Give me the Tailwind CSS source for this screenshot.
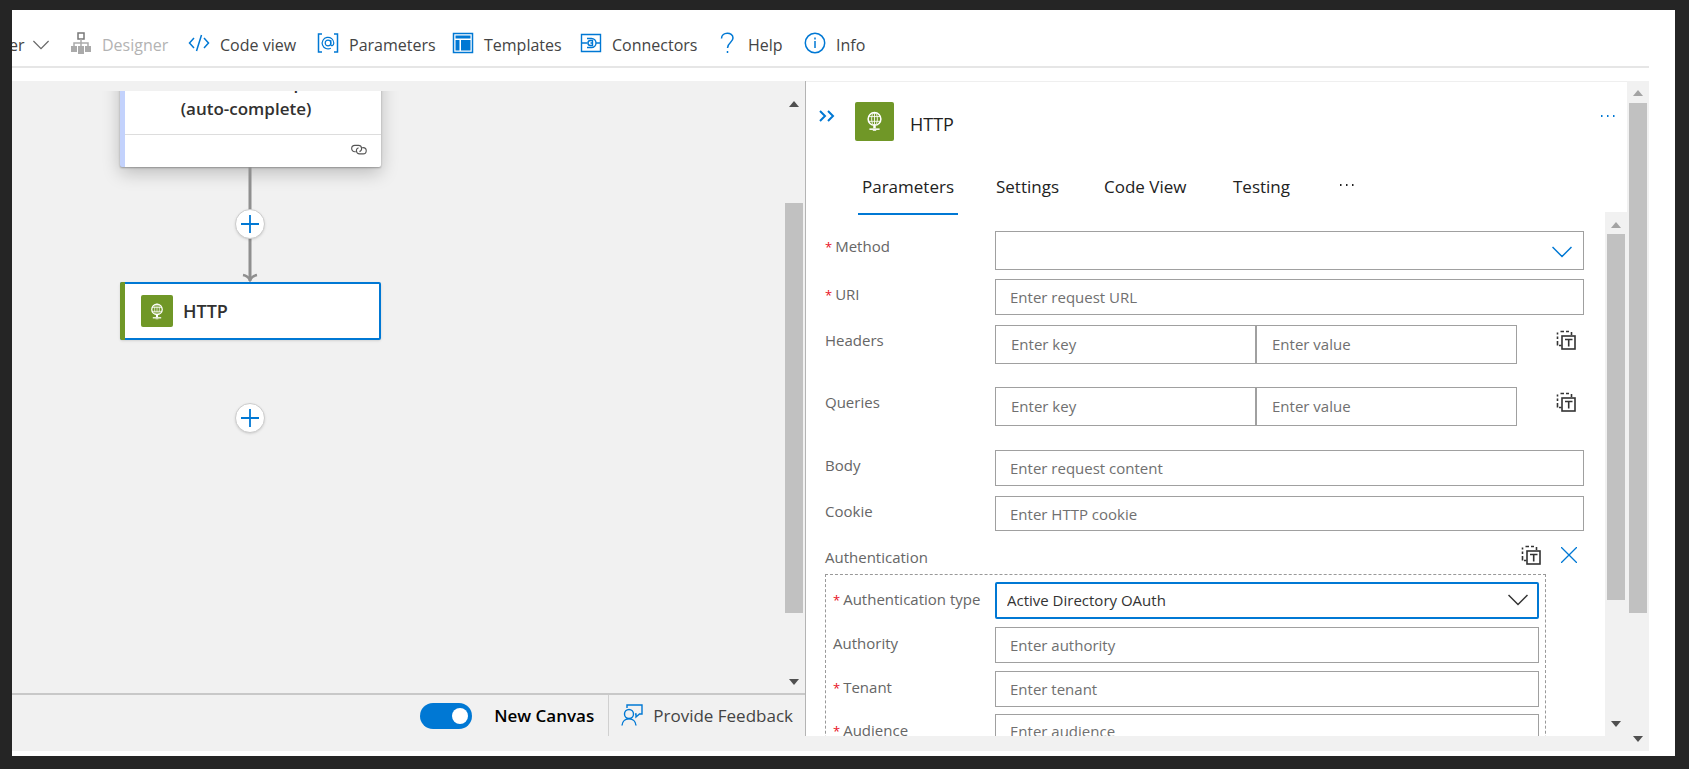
<!DOCTYPE html>
<html lang="en">
<head>
  <meta charset="UTF-8">
  <meta name="viewport" content="width=device-width, initial-scale=1.0">
  <title>Logic app designer</title>
  <script src="https://cdn.jsdelivr.net/npm/@tailwindcss/browser@4"></script>
</head>
<body class="bg-[#252525] font-['Segoe_UI','Open_Sans',sans-serif]">

<!-- Shared icons -->
<svg class="hidden" aria-hidden="true">
  <symbol id="globe" viewBox="0 0 20 24" fill="none" stroke="#fff">
    <circle cx="10" cy="9" r="7.5" stroke-width="1.8"/>
    <ellipse cx="10" cy="9" rx="3.4" ry="7.5"/>
    <path d="M3 6.2h14M3 11.8h14M10 1.5v15"/>
    <path d="M10 17v3" stroke-width="3"/>
    <path d="M4 21h12" stroke-width="1.8"/>
    <path d="M8 22.5h4"/>
  </symbol>
  <symbol id="dynamic" viewBox="0 0 20 20" fill="none" stroke="#333">
    <path d="M1.500 15.500V11M1.500 9V6.500M1.500 4.500V2.500M4.500 1.500H8M10 1.500h3M15.500 2v3M3 15.500h2.500" stroke-width="1.600"/>
    <rect x="6" y="6" width="13" height="13" stroke-width="1.600"/>
    <path d="M9 9.500h7.500M12.700 9.500v7" stroke-width="1.600"/>
  </symbol>
  <symbol id="chevron" viewBox="0 0 20 12" fill="none" stroke="currentColor">
    <path d="M0.500 1l9.500 9.500L19.500 1" stroke-width="1.5"/>
  </symbol>
  <symbol id="dots" viewBox="0 0 16 4" fill="currentColor">
    <path d="M1 1h1.500v2H1zM7 1h1.500v2H7zM13 1h1.500v2H13z"/>
  </symbol>
  <symbol id="up" viewBox="0 0 10 6"><path d="M5 0l5 6H0z" fill="currentColor"/></symbol>
  <symbol id="down" viewBox="0 0 10 6"><path d="M0 0h10L5 6z" fill="currentColor"/></symbol>
  <symbol id="plus" viewBox="0 0 20 20"><path d="M10 1v18M1 10h18" stroke="#0078d4" stroke-width="1.8"/></symbol>
</svg>

<div class="h-screen pt-[10px] pb-[13px] pl-3 pr-[14px]">
  <div class="h-full flex flex-col bg-white overflow-hidden pr-[26px] pb-[5px]">

    <!-- Toolbar -->
    <nav class="h-[58px] shrink-0 flex items-center border-b-2 border-[#e6e6e6] pt-[14px] text-base text-[#444] whitespace-nowrap">
      <button class="flex items-center gap-2 w-[58px] shrink-0 text-left">
        <span class="-ml-[3px]">er</span>
        <svg class="w-4 h-[10px] text-[#666]"><use href="#chevron"/></svg>
      </button>
      <button disabled class="flex items-center gap-[10px] w-[118px] shrink-0 text-[#b3b3b3]">
        <svg class="w-[22px] h-[22px] mb-1" viewBox="0 0 22 22">
          <rect x="8" y="1" width="6" height="6" fill="none" stroke="#777" stroke-width="1.5"/>
          <path d="M11 7v8M4 15v-4h14v4" fill="none" stroke="#aaa" stroke-width="1.5"/>
          <path d="M1 14h6v6H1zM8 14h6v8H8zM15 14h6v6h-6z" fill="#aaa"/>
        </svg>
        <span>Designer</span>
      </button>
      <button class="flex items-center gap-[10px] w-[129px] shrink-0">
        <svg class="w-[22px] h-[22px] mb-1" viewBox="0 0 22 22" fill="none" stroke="#0078d4" stroke-width="1.5">
          <path d="M6 6l-4.500 5L6 16M16 6l4.500 5L16 16M13.500 3l-5 16"/>
        </svg>
        <span>Code view</span>
      </button>
      <button class="flex items-center gap-[10px] w-[135px] shrink-0">
        <svg class="w-[22px] h-[22px] mb-1" viewBox="0 0 22 22" fill="none" stroke="#0078d4" stroke-width="1.5">
          <path d="M5 2H1.500v18H5M17 2h3.500v18H17"/>
          <circle cx="11" cy="11" r="2.800" stroke-width="1.2"/>
          <path d="M13.800 8v4.500c0 2 3 1.500 3-1.500a5.800 5.800 0 1 0-3 5.200" stroke-width="1.2"/>
        </svg>
        <span>Parameters</span>
      </button>
      <button class="flex items-center gap-[10px] w-[128px] shrink-0">
        <svg class="w-[22px] h-[22px] mb-1" viewBox="0 0 22 22">
          <rect x="1.500" y="1.500" width="19" height="19" fill="#fff" stroke="#0078d4" stroke-width="1.5"/>
          <path d="M3.500 3.500h15v3h-15zM3.500 8h4v10.500h-4zM9 8h9.500v10.500H9z" fill="#0078d4"/>
        </svg>
        <span>Templates</span>
      </button>
      <button class="flex items-center gap-[10px] w-[138px] shrink-0">
        <svg class="w-[22px] h-[22px] mb-1" viewBox="0 0 22 22" fill="none" stroke="#0078d4" stroke-width="1.4">
          <path d="M1.500 2.500h19v17h-19z"/>
          <path d="M7 6.500h4.500a4.500 4.500 0 0 1 0 9H7M16 11h4.500M1.500 11h6"/>
          <path d="M12.500 8.500h-2a2.500 2.500 0 0 0 0 5h2zM12.500 11h-2"/>
        </svg>
        <span>Connectors</span>
      </button>
      <button class="flex items-center gap-[10px] w-[86px] shrink-0">
        <svg class="w-[20px] h-[22px] mb-1" viewBox="0 0 20 22" fill="none" stroke="#0078d4" stroke-width="1.5">
          <path d="M3.500 6.500c0-7 11.500-7 11.500-.5 0 4.500-5.500 4.500-5.500 10M9.500 19v2"/>
        </svg>
        <span>Help</span>
      </button>
      <button class="flex items-center gap-[10px] shrink-0">
        <svg class="w-[22px] h-[22px] mb-1" viewBox="0 0 22 22" fill="none" stroke="#0078d4" stroke-width="1.5">
          <circle cx="11" cy="11" r="9.700"/><path d="M11 9v7M11 5.500v2"/>
        </svg>
        <span>Info</span>
      </button>
    </nav>

    <main class="mt-[13px] flex-1 min-h-0 grid grid-cols-[793fr_822fr_22px] bg-[#f1f1f1]">

      <!-- Designer canvas -->
      <section class="flex flex-col min-w-0 min-h-0 mb-[15px]">
        <div class="flex-1 min-h-0 flex pt-[10px]">
          <div class="relative flex-1 overflow-hidden">

            <!-- Trigger card -->
            <div class="absolute left-[108px] -top-[30px] w-[261px] h-[106px] bg-white border-l-5 border-[#c3d2fc] rounded-xs shadow-[0_6px_18px_rgba(0,0,0,0.22),0_1px_2px_rgba(0,0,0,0.3)] flex flex-col">
              <div class="flex-1 text-[17px] leading-[26px] font-semibold text-[#323130] pt-[9px]">
                <p class="text-right pr-[77px]">p</p>
                <p class="text-center pr-[14px]">(auto-complete)</p>
              </div>
              <div class="h-[33px] border-t border-[#ddd] flex items-center justify-end pr-[14px] pb-1">
                <svg class="w-4 h-[11px]" viewBox="0 0 17 12" fill="none" stroke="#555" stroke-width="1.2">
                  <path d="M5 8.500H4a3.500 3.500 0 0 1 0-7h4a3.500 3.500 0 0 1 1 6.800"/>
                  <path d="M12 4h1a3.300 3.300 0 0 1 0 6.800H9a3.500 3.500 0 0 1-1-6.800"/>
                </svg>
              </div>
            </div>

            <!-- Edge -->
            <svg class="absolute left-[228px] top-[76px] w-5 h-[115px]" viewBox="0 0 20 115" fill="none" stroke="#8f8f8f" stroke-width="3">
              <path d="M10 0v114"/><path d="M3 108q5 1 7 5q2-4 7-5" stroke-width="2.500"/>
            </svg>
            <button aria-label="Insert step" class="absolute left-[223px] top-[118px] size-[30px] rounded-full bg-white border border-[#ccc] shadow-sm flex items-center justify-center">
              <svg class="size-5"><use href="#plus"/></svg>
            </button>

            <!-- HTTP action card -->
            <div class="absolute left-[108px] top-[191px] w-[261px] h-[58px] bg-white border-2 border-[#0078d4] rounded-xs shadow-sm flex items-center">
              <span class="-ml-[2px] w-[5px] h-[58px] bg-[#709727] rounded-l-xs shrink-0"></span>
              <span class="ml-4 size-8 bg-[#709727] rounded-xs flex items-center justify-center">
                <svg class="w-[14px] h-[17px]"><use href="#globe"/></svg>
              </span>
              <span class="ml-[10px] text-lg font-semibold text-[#323130]">HTTP</span>
            </div>

            <button aria-label="Add step" class="absolute left-[223px] top-[312px] size-[30px] rounded-full bg-white border border-[#ccc] shadow-sm flex items-center justify-center">
              <svg class="size-5"><use href="#plus"/></svg>
            </button>
          </div>

          <!-- Canvas scrollbar -->
          <div class="w-[22px] flex flex-col items-center pt-[10px] pb-2 text-[#505050]">
            <svg class="w-[10px] h-[6px] shrink-0"><use href="#up"/></svg>
            <div class="mt-[96px] w-[18px] h-[410px] bg-[#c1c1c1]"></div>
            <svg class="mt-auto w-[10px] h-[6px] shrink-0"><use href="#down"/></svg>
          </div>
        </div>

        <!-- Canvas footer -->
        <footer class="h-[43px] shrink-0 border-t-2 border-[#c8c8c8] flex justify-end text-[17px]">
          <label class="flex items-center gap-[22px] pr-[14px] font-semibold text-black">
            <input type="checkbox" checked class="peer sr-only">
            <span class="w-[52px] h-[26px] rounded-full bg-[#0078d4] flex items-center justify-end pr-1">
              <span class="size-4 rounded-full bg-white"></span>
            </span>
            New Canvas
          </label>
          <button class="flex items-center gap-[10px] border-l border-[#d0d0d0] pl-3 pr-3 text-[#444]">
            <svg class="w-[22px] h-[22px] mb-[2px]" viewBox="0 0 22 22" fill="none" stroke="#0078d4" stroke-width="1.4">
              <circle cx="8" cy="10" r="4.500"/>
              <path d="M1 21.500c.5-9 13.500-9 14 0"/>
              <path d="M6 4V1h15v9h-2.500l-3.500 3v-3h-1"/>
            </svg>
            Provide Feedback
          </button>
        </footer>
      </section>

      <!-- Action details -->
      <section class="flex flex-col min-w-0 min-h-0 mb-[15px] bg-white border-l border-[#b4b4b4]">
        <header class="shrink-0 h-[131px] flex flex-col justify-between border-t border-[#efefef]">
          <div class="flex items-start pt-5 pl-[13px] pr-[11px]">
            <button aria-label="Collapse" class="mt-2">
              <svg class="w-4 h-3" viewBox="0 0 16 12" fill="none" stroke="#0078d4" stroke-width="2"><path d="M1 1l5 5-5 5M9 1l5 5-5 5"/></svg>
            </button>
            <span class="ml-5 w-[39px] h-[39px] bg-[#709727] rounded-xs flex items-center justify-center">
              <svg class="w-[17px] h-[21px]"><use href="#globe"/></svg>
            </span>
            <h2 class="ml-4 pt-2 text-lg text-[#222]">HTTP</h2>
            <button aria-label="More" class="ml-auto mt-3 text-[#0078d4]"><svg class="w-4 h-1"><use href="#dots"/></svg></button>
          </div>
          <div role="tablist" class="-mb-[3px] h-10 flex items-start pl-[52px] text-[17px] leading-6 text-[#222] whitespace-nowrap">
            <button role="tab" aria-selected="true" class="w-[100px] h-full pb-[14px] border-b-2 border-[#0078d4]">Parameters</button>
            <button role="tab" class="ml-[38px] w-[108px] text-left">Settings</button>
            <button role="tab" class="w-[129px] text-left">Code View</button>
            <button role="tab" class="w-[106px] text-left">Testing</button>
            <button aria-label="More tabs" class="pt-2"><svg class="w-4 h-1"><use href="#dots"/></svg></button>
          </div>
        </header>

        <div class="flex-1 min-h-0 flex">
          <form class="flex-1 min-w-0 overflow-hidden pt-[19px] pl-[19px] pr-[21px] text-[15px] leading-5 text-[#666]">
            <div class="flex mb-[9px]">
              <label for="method" class="w-[170px] pt-[5px]"><span class="text-[13px] text-[#e81123] mr-[3px]">*</span>Method</label>
              <div class="relative flex-1">
                <select id="method" class="w-full h-[39px] border border-[#a0a0a0] appearance-none"><option></option></select>
                <svg class="absolute right-3 top-[15px] w-5 h-3 text-[#0078d4] pointer-events-none"><use href="#chevron"/></svg>
              </div>
            </div>
            <div class="flex mb-[10px]">
              <label for="uri" class="w-[170px] pt-[5px]"><span class="text-[13px] text-[#e81123] mr-[3px]">*</span>URI</label>
              <input id="uri" type="text" placeholder="Enter request URL" class="flex-1 h-9 border border-[#a0a0a0] px-[14px] placeholder:text-[#707070]">
            </div>
            <div class="flex mb-[23px]">
              <label for="headerKey" class="w-[170px] pt-[5px]">Headers</label>
              <input id="headerKey" type="text" placeholder="Enter key" class="flex-1 min-w-0 h-[39px] border border-[#a0a0a0] px-[15px] pb-[2px] placeholder:text-[#707070]">
              <input aria-label="Header value" type="text" placeholder="Enter value" class="flex-1 min-w-0 h-[39px] border border-[#a0a0a0] px-[15px] pb-[2px] placeholder:text-[#707070]">
              <button type="button" aria-label="Switch headers to text mode" class="w-[67px] pl-[39px] pt-[5px] self-start"><svg class="size-5"><use href="#dynamic"/></svg></button>
            </div>
            <div class="flex mb-[24px]">
              <label for="queryKey" class="w-[170px] pt-[5px]">Queries</label>
              <input id="queryKey" type="text" placeholder="Enter key" class="flex-1 min-w-0 h-[39px] border border-[#a0a0a0] px-[15px] pb-[2px] placeholder:text-[#707070]">
              <input aria-label="Query value" type="text" placeholder="Enter value" class="flex-1 min-w-0 h-[39px] border border-[#a0a0a0] px-[15px] pb-[2px] placeholder:text-[#707070]">
              <button type="button" aria-label="Switch queries to text mode" class="w-[67px] pl-[39px] pt-[5px] self-start"><svg class="size-5"><use href="#dynamic"/></svg></button>
            </div>
            <div class="flex mb-[10px]">
              <label for="body" class="w-[170px] pt-[5px]">Body</label>
              <input id="body" type="text" placeholder="Enter request content" class="flex-1 h-9 border border-[#a0a0a0] px-[14px] placeholder:text-[#707070]">
            </div>
            <div class="flex">
              <label for="cookie" class="w-[170px] pt-[5px]">Cookie</label>
              <input id="cookie" type="text" placeholder="Enter HTTP cookie" class="flex-1 h-[35px] border border-[#a0a0a0] px-[14px] placeholder:text-[#707070]">
            </div>

            <div class="flex items-center h-[43px] pt-2 pr-[7px]">
              <span>Authentication</span>
              <button type="button" aria-label="Switch authentication to text mode" class="ml-auto mb-1"><svg class="size-5"><use href="#dynamic"/></svg></button>
              <button type="button" aria-label="Remove authentication" class="ml-5 mb-1">
                <svg class="size-4" viewBox="0 0 16 16" stroke="#0078d4" stroke-width="1.3"><path d="M0 0l16 16M16 0L0 16"/></svg>
              </button>
            </div>
            <fieldset class="mr-[38px] border border-dashed border-[#999] pt-[7px] pb-2 pl-[7px] pr-[6px] flex flex-col gap-2">
              <div class="flex">
                <label for="authType" class="w-[162px] pt-[7px]"><span class="text-[13px] text-[#e81123] mr-[3px]">*</span>Authentication type</label>
                <div class="relative flex-1">
                  <select id="authType" class="w-full h-[37px] border-2 border-[#0078d4] rounded-xs appearance-none px-[10px] pb-[2px] text-[#333]"><option>Active Directory OAuth</option></select>
                  <svg class="absolute right-[11px] top-3 w-5 h-3 text-[#333] pointer-events-none"><use href="#chevron"/></svg>
                </div>
              </div>
              <div class="flex">
                <label for="authority" class="w-[162px] pt-[6px]">Authority</label>
                <input id="authority" type="text" placeholder="Enter authority" class="flex-1 h-9 border border-[#a0a0a0] px-[14px] placeholder:text-[#707070]">
              </div>
              <div class="flex">
                <label for="tenant" class="w-[162px] pt-[6px]"><span class="text-[13px] text-[#e81123] mr-[3px]">*</span>Tenant</label>
                <input id="tenant" type="text" placeholder="Enter tenant" class="flex-1 h-9 border border-[#a0a0a0] px-[14px] placeholder:text-[#707070]">
              </div>
              <div class="flex -mt-px">
                <label for="audience" class="w-[162px] pt-[6px]"><span class="text-[13px] text-[#e81123] mr-[3px]">*</span>Audience</label>
                <input id="audience" type="text" placeholder="Enter audience" class="flex-1 h-9 border border-[#a0a0a0] px-[14px] pb-[2px] placeholder:text-[#707070]">
              </div>
            </fieldset>
          </form>

          <!-- Form scrollbar -->
          <div class="w-[22px] shrink-0 flex flex-col items-center pt-[10px] pb-[9px] bg-[#f1f1f1]">
            <svg class="w-[10px] h-[6px] shrink-0 text-[#a3a3a3]"><use href="#up"/></svg>
            <div class="mt-[6px] w-[18px] h-[366px] bg-[#c1c1c1]"></div>
            <svg class="mt-auto w-[10px] h-[6px] shrink-0 text-[#505050]"><use href="#down"/></svg>
          </div>
        </div>
      </section>

      <!-- Page scrollbar -->
      <div class="flex flex-col items-center pt-[9px] pb-[9px]">
        <svg class="w-[10px] h-[6px] shrink-0 text-[#a3a3a3]"><use href="#up"/></svg>
        <div class="mt-[7px] w-[18px] h-[510px] bg-[#c1c1c1]"></div>
        <svg class="mt-auto w-[10px] h-[6px] shrink-0 text-[#505050]"><use href="#down"/></svg>
      </div>
    </main>
  </div>
</div>

</body>
</html>
